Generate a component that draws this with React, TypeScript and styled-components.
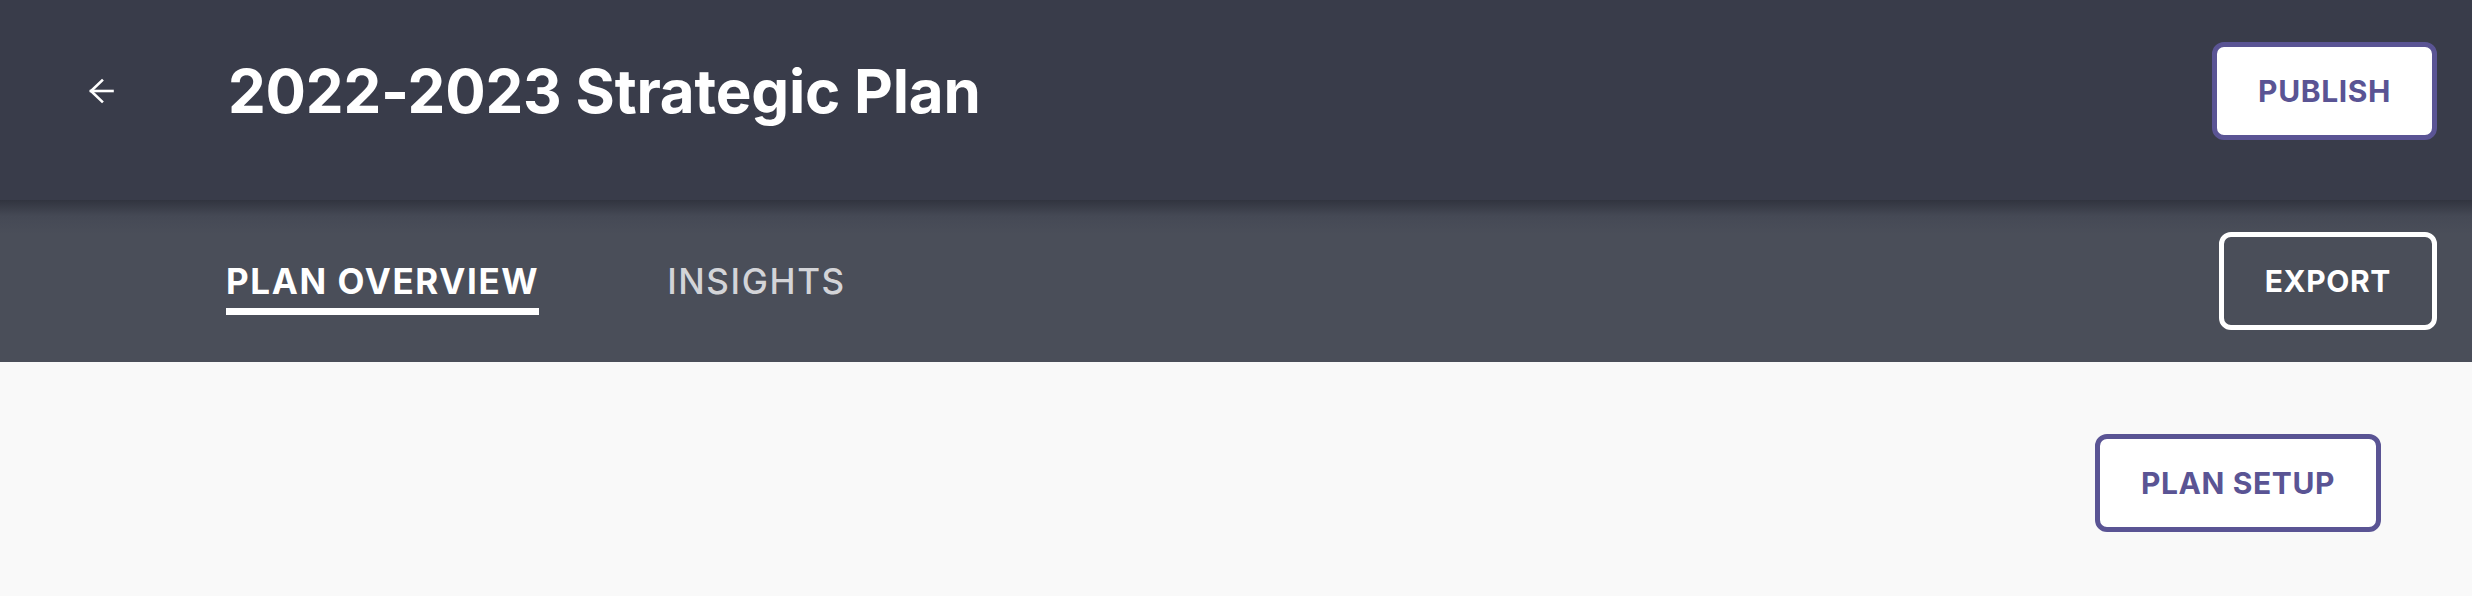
import React from "react";
import styled, { createGlobalStyle } from "styled-components";

const GlobalStyle = createGlobalStyle`
  html, body {
    margin: 0;
    padding: 0;
    background: #f9f9f9;
    font-family: Inter, "Noto Sans", "Liberation Sans", sans-serif;
  }
  * { box-sizing: border-box; }
`;

const Page = styled.div`
  display: flex;
  flex-direction: column;
  min-height: 596px;
  background: #f9f9f9;
`;

const TopBar = styled.header`
  height: 200px;
  display: flex;
  align-items: center;
  padding: 0 35px 18px 88px;
  background: #393c4a;
`;

const BackButton = styled.button`
  display: flex;
  align-items: center;
  justify-content: center;
  width: 26px;
  height: 26px;
  padding: 0;
  margin-right: 114px;
  border: none;
  background: none;
  color: #ffffff;
  cursor: pointer;
`;

const Title = styled.h1`
  flex: 1;
  margin: 0;
  color: #ffffff;
  font-size: 60px;
  font-weight: 700;
  letter-spacing: -0.2px;
  line-height: 1;
`;

const OutlineButton = styled.button<{ $variant: "light" | "ghost" }>`
  display: inline-flex;
  align-items: center;
  justify-content: center;
  height: 98px;
  padding: 0 41px;
  border-radius: 12px;
  border: 5px solid ${(p) => (p.$variant === "ghost" ? "#ffffff" : "#5a5494")};
  background: ${(p) => (p.$variant === "ghost" ? "transparent" : "#ffffff")};
  color: ${(p) => (p.$variant === "ghost" ? "#ffffff" : "#5a5494")};
  font-family: Inter, "Noto Sans", sans-serif;
  font-size: 30px;
  font-weight: 700;
  letter-spacing: 0.6px;
  cursor: pointer;
`;

const TabBar = styled.nav`
  height: 162px;
  display: flex;
  align-items: center;
  padding: 0 35px 0 226px;
  background: linear-gradient(to bottom, #31343f 0px, #454955 16px, #4a4e59 34px, #4a4e59 100%);
`;

const Tabs = styled.div`
  flex: 1;
  display: flex;
  align-items: center;
  gap: 128px;
`;

const Tab = styled.a<{ $active?: boolean }>`
  position: relative;
  color: ${(p) => (p.$active ? "#ffffff" : "#d3d4d8")};
  font-size: 35px;
  font-weight: ${(p) => (p.$active ? 700 : 500)};
  letter-spacing: 1.6px;
  line-height: 1;
  text-decoration: none;
  cursor: pointer;

  &::after {
    content: "";
    display: ${(p) => (p.$active ? "block" : "none")};
    position: absolute;
    left: 0;
    right: 0;
    bottom: -16px;
    height: 7px;
    background: #ffffff;
  }
`;

const Content = styled.main`
  flex: 1;
  display: flex;
  justify-content: flex-end;
  align-items: flex-start;
  padding: 72px 91px 0 0;
`;

const ArrowLeft = () => (
  <svg width="26" height="26" viewBox="0 0 26 26" fill="none" stroke="currentColor" strokeWidth="2.6" strokeLinecap="square" strokeLinejoin="miter">
    <path d="M24.5 13H3" />
    <path d="M14 2.5L3 13l11 10.5" />
  </svg>
);

export default function App() {
  return (
    <Page>
      <GlobalStyle />
      <TopBar>
        <BackButton aria-label="Back">
          <ArrowLeft />
        </BackButton>
        <Title>2022-2023 Strategic Plan</Title>
        <OutlineButton $variant="light">PUBLISH</OutlineButton>
      </TopBar>
      <TabBar>
        <Tabs>
          <Tab $active>PLAN OVERVIEW</Tab>
          <Tab>INSIGHTS</Tab>
        </Tabs>
        <OutlineButton $variant="ghost">EXPORT</OutlineButton>
      </TabBar>
      <Content>
        <OutlineButton $variant="light">PLAN SETUP</OutlineButton>
      </Content>
    </Page>
  );
}
